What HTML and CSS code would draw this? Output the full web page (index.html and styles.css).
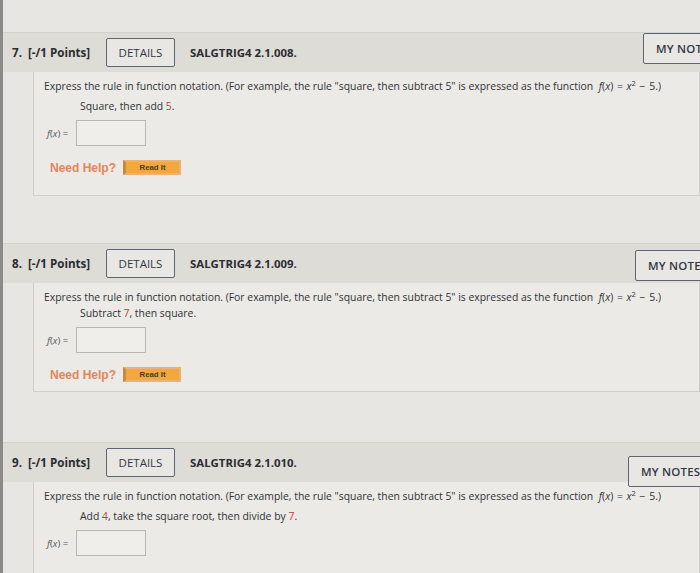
FILE: index.html
```html
<!DOCTYPE html>
<html>
<head>
<meta charset="utf-8">
<link rel="stylesheet" href="styles.css">
</head>
<body>
<div class="page">
  <section class="question q7">
    <div class="q-head">
      <span class="num">7.&nbsp; [-/1 Points]</span>
      <span class="btn details">DETAILS</span>
      <span class="code">SALGTRIG4 2.1.008.</span>
      <span class="btn notes">MY NOTES</span>
    </div>
    <div class="q-body">
      <p class="prompt">Express the rule in function notation. (For example, the rule "square, then subtract 5" is expressed as the function <span class="math"><i>f</i>(<i>x</i>) = <i>x</i><sup>2</sup> &minus; 5</span>.)</p>
      <p class="task">Square, then add <span class="red">5</span>.</p>
      <div class="answer"><span class="fx"><i>f</i>(<i>x</i>) =</span><span class="box"></span></div>
      <div class="help"><span class="need">Need Help?</span><span class="readit">Read It</span></div>
    </div>
  </section>

  <section class="question q8">
    <div class="q-head">
      <span class="num">8.&nbsp; [-/1 Points]</span>
      <span class="btn details">DETAILS</span>
      <span class="code">SALGTRIG4 2.1.009.</span>
      <span class="btn notes">MY NOTES</span>
    </div>
    <div class="q-body">
      <p class="prompt">Express the rule in function notation. (For example, the rule "square, then subtract 5" is expressed as the function <span class="math"><i>f</i>(<i>x</i>) = <i>x</i><sup>2</sup> &minus; 5</span>.)</p>
      <p class="task">Subtract <span class="red">7</span>, then square.</p>
      <div class="answer"><span class="fx"><i>f</i>(<i>x</i>) =</span><span class="box"></span></div>
      <div class="help"><span class="need">Need Help?</span><span class="readit">Read It</span></div>
    </div>
  </section>

  <section class="question q9">
    <div class="q-head">
      <span class="num">9.&nbsp; [-/1 Points]</span>
      <span class="btn details">DETAILS</span>
      <span class="code">SALGTRIG4 2.1.010.</span>
      <span class="btn notes">MY NOTES</span>
    </div>
    <div class="q-body">
      <p class="prompt">Express the rule in function notation. (For example, the rule "square, then subtract 5" is expressed as the function <span class="math"><i>f</i>(<i>x</i>) = <i>x</i><sup>2</sup> &minus; 5</span>.)</p>
      <p class="task">Add <span class="red">4</span>, take the square root, then divide by <span class="red">7</span>.</p>
      <div class="answer"><span class="fx"><i>f</i>(<i>x</i>) =</span><span class="box"></span></div>
    </div>
  </section>
  <div class="bottom-bar"></div>
</div>
</body>
</html>
```

FILE: styles.css
```css
html, body {
  margin: 0;
  padding: 0;
}
body {
  background: #e7e6e2;
  font-family: "Open Sans", "DejaVu Sans", sans-serif;
  color: #2f3033;
  overflow: hidden;
}
.page {
  height: 573px;
  box-sizing: border-box;
  border-left: 3px solid #8a8a88;
  padding-top: 32px;
  display: flex;
  flex-direction: column;
  overflow: hidden;
}
.question {
  margin-bottom: 47px;
}
.q8 {
  margin-bottom: 50px;
}
.q-head {
  display: flex;
  align-items: center;
  height: 39px;
  background: #dedcd7;
  border-top: 1px solid #d3d2cd;
  padding-left: 9px;
}
.num {
  width: 94px;
  font-weight: 700;
  font-size: 11.6px;
  color: #2b2c30;
}
.btn {
  display: flex;
  align-items: center;
  box-sizing: border-box;
  border: 1.5px solid #5d6573;
  border-radius: 2px;
  background: #e8e7e3;
  font-size: 11.5px;
  color: #323845;
}
.details {
  height: 29px;
  width: 69px;
  justify-content: center;
}
.code {
  margin-left: 15px;
  font-weight: 700;
  font-size: 11.4px;
  color: #2b2c30;
}
.notes {
  margin-left: auto;
  width: 100px;
  height: 31px;
  padding-left: 12px;
  font-weight: 600;
  letter-spacing: 0.2px;
}
.q7 .notes { margin-right: -43px; align-self: flex-start; }
.q8 .notes { margin-right: -35px; margin-top: 4px; }
.q9 .notes { margin-right: -28px; margin-top: 14px; margin-bottom: -4px; }

.q-body {
  margin-left: 30px;
  border: 1px solid #cfcec9;
  border-top: none;
  background: #ebeae6;
  padding: 6px 0 20px 10px;
}
.q8 .q-body { padding-bottom: 9px; }
.q8 .task { margin-top: 0; }
.q9 .q-body { border-bottom: none; }
.prompt {
  margin: 0;
  font-size: 10.4px;
  line-height: 16px;
  white-space: nowrap;
  color: #303236;
}
.math {
  margin-left: 3px;
  word-spacing: 1px;
}
.math i { font-style: italic; }
.math sup { font-size: 7.5px; line-height: 0; }
.task {
  margin: 4px 0 0 36px;
  font-size: 10.4px;
  line-height: 16px;
  color: #303236;
}
.red { color: #c7393d; }
.answer {
  display: flex;
  align-items: center;
  gap: 8px;
  margin: 6px 0 0 3px;
}
.fx {
  font-size: 9.6px;
  color: #55575b;
}
.box {
  display: block;
  width: 70px;
  height: 26px;
  box-sizing: border-box;
  border: 1px solid #b6b6b3;
  background: #efeeeb;
}
.help {
  display: flex;
  align-items: center;
  gap: 7px;
  margin: 14px 0 0 6px;
}
.need {
  font-family: "Liberation Sans", Arial, sans-serif;
  font-weight: 700;
  font-size: 12px;
  color: #e2855b;
}
.readit {
  display: flex;
  align-items: center;
  justify-content: center;
  width: 58px;
  height: 15px;
  box-sizing: border-box;
  border: 2px solid #eab27a;
  border-left-width: 3px;
  border-left-color: #c98a3c;
  background: #f2a83c;
  font-family: "Liberation Sans", Arial, sans-serif;
  font-weight: 700;
  font-size: 7.8px;
  color: #4a3a22;
}
.bottom-bar {
  margin-top: auto;
  height: 10px;
  background: #363a40;
  margin-left: -3px;
}
```
